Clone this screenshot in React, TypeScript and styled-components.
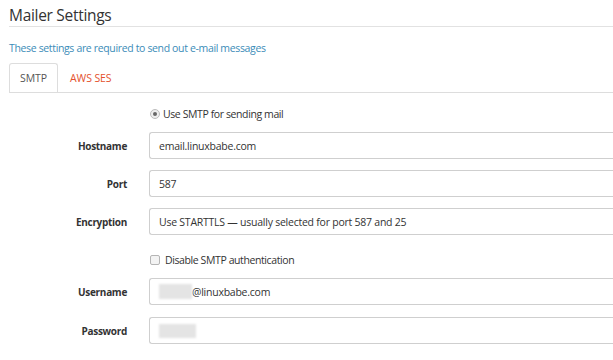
import styled, { createGlobalStyle } from "styled-components";

const GlobalStyle = createGlobalStyle`
  html, body {
    margin: 0;
    padding: 0;
    background: #ffffff;
    overflow: hidden;
  }
  body {
    font-family: "Open Sans", "Noto Sans", sans-serif;
    color: #333333;
  }
`;

const Page = styled.div`
  width: 613px;
  height: 360px;
  overflow: hidden;
  padding-left: 9px;
  box-sizing: border-box;
`;

const Title = styled.h1`
  margin: 0;
  padding-top: 5px;
  height: 21px;
  font-size: 15.5px;
  font-weight: 400;
  line-height: 20px;
  letter-spacing: -0.3px;
  color: #333333;
  border-bottom: 1px solid #e2e2e2;
`;

const Subtitle = styled.p`
  margin: 14px 0 0;
  font-size: 10.5px;
  line-height: 14px;
  letter-spacing: -0.35px;
  color: #3b8cb8;
`;

const Tabs = styled.div`
  display: flex;
  margin-top: 8px;
  height: 29px;
  border-bottom: 1px solid #dddddd;
`;

const Tab = styled.span<{ $active?: boolean }>`
  display: flex;
  align-items: center;
  justify-content: center;
  padding: 0 11px;
  font-size: 10.5px;
  letter-spacing: -0.1px;
  color: ${(p) => (p.$active ? "#555555" : "#e4512c")};
  background: #ffffff;
  border: 1px solid ${(p) => (p.$active ? "#dddddd" : "transparent")};
  border-bottom: none;
  border-radius: 3px 3px 0 0;
  margin-bottom: -1px;
  height: 29px;
  box-sizing: border-box;
  width: ${(p) => (p.$active ? "49px" : "auto")};
`;

const Form = styled.div`
  display: flex;
  flex-direction: column;
  padding-top: 11px;
`;

const Row = styled.div<{ $after: number }>`
  display: grid;
  grid-template-columns: 118px 600px;
  column-gap: 22px;
  align-items: center;
  margin-bottom: ${(p) => p.$after}px;
`;

const Label = styled.label`
  text-align: right;
  font-size: 10px;
  font-weight: 700;
  letter-spacing: -0.3px;
  color: #333333;
`;

const Input = styled.div`
  height: 27px;
  box-sizing: border-box;
  border: 1px solid #cfcfcf;
  border-right: none;
  border-radius: 3px 0 0 3px;
  padding-left: 9px;
  display: flex;
  align-items: center;
  font-size: 10.5px;
  color: #333333;
  letter-spacing: -0.24px;
`;

const Option = styled.div<{ $gap: number }>`
  display: flex;
  align-items: center;
  gap: ${(p) => p.$gap}px;
  height: 20px;
  padding-left: 1px;
  font-size: 10.5px;
  color: #333333;
  letter-spacing: -0.4px;
`;

const Radio = styled.span`
  width: 8px;
  height: 8px;
  border-radius: 50%;
  border: 1px solid #bdbdbd;
  background: #eeeeee;
  display: flex;
  align-items: center;
  justify-content: center;
  &::after {
    content: "";
    width: 4px;
    height: 4px;
    border-radius: 50%;
    background: #666666;
  }
`;

const Checkbox = styled.span`
  width: 8px;
  height: 8px;
  border-radius: 2px;
  border: 1px solid #b5b5b5;
  background: #f3f3f3;
`;

const Blur = styled.span<{ $w: number; $h: number }>`
  display: inline-block;
  width: ${(p) => p.$w}px;
  height: ${(p) => p.$h}px;
  background: #e4e4e4;
  filter: blur(0.8px);
`;

export default function App() {
  return (
    <>
      <GlobalStyle />
      <Page>
        <Title>Mailer Settings</Title>
        <Subtitle>These settings are required to send out e-mail messages</Subtitle>
        <Tabs>
          <Tab $active>SMTP</Tab>
          <Tab>AWS SES</Tab>
        </Tabs>
        <Form>
          <Row $after={8}>
            <span />
            <Option $gap={3}>
              <Radio />
              Use SMTP for sending mail
            </Option>
          </Row>
          <Row $after={11}>
            <Label>Hostname</Label>
            <Input>email.linuxbabe.com</Input>
          </Row>
          <Row $after={11}>
            <Label>Port</Label>
            <Input>587</Input>
          </Row>
          <Row $after={15}>
            <Label>Encryption</Label>
            <Input>Use STARTTLS — usually selected for port 587 and 25</Input>
          </Row>
          <Row $after={8}>
            <span />
            <Option $gap={5}>
              <Checkbox />
              Disable SMTP authentication
            </Option>
          </Row>
          <Row $after={12}>
            <Label>Username</Label>
            <Input>
              <Blur $w={33} $h={15} />
              @linuxbabe.com
            </Input>
          </Row>
          <Row $after={0}>
            <Label>Password</Label>
            <Input>
              <Blur $w={37} $h={14} />
            </Input>
          </Row>
        </Form>
      </Page>
    </>
  );
}
